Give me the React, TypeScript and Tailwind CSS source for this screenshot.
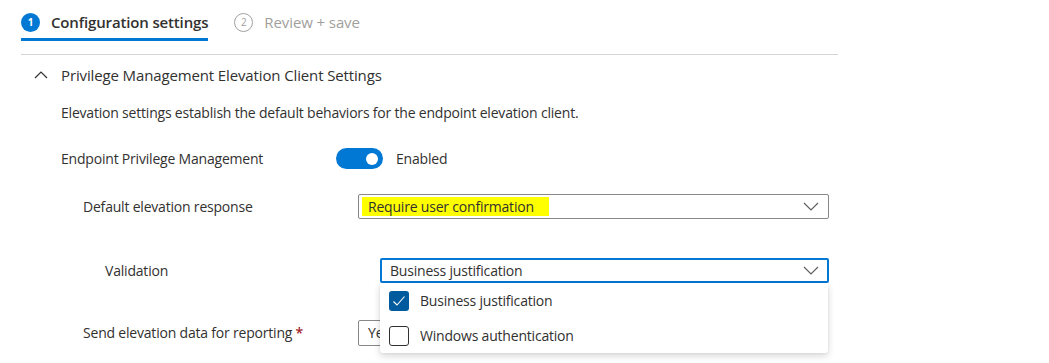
import React from "react";

function ChevronDown() {
  return (
    <svg width="16" height="9" viewBox="0 0 16 9" fill="none">
      <polyline points="1,1 8,8 15,1" stroke="#605e5c" strokeWidth="1.2" />
    </svg>
  );
}

function ChevronUp() {
  return (
    <svg width="14" height="8" viewBox="0 0 14 8" fill="none">
      <polyline points="1,7 7,1 13,7" stroke="#323130" strokeWidth="1.2" />
    </svg>
  );
}

export default function App() {
  return (
    <div className="w-[1049px] h-[363px] bg-white overflow-hidden font-['Open_Sans',sans-serif] text-[#323130] tracking-[-0.2px]">
      <div className="pl-[21px]">
        {/* Tabs */}
        <div className="flex gap-[26px]">
          <div className="flex items-center h-[41px] pt-[6px] border-b-[3px] border-[#0078d4]">
            <div className="w-[19px] h-[19px] rounded-full bg-[#0078d4] text-white text-[10px] font-bold flex items-center justify-center tracking-normal">
              1
            </div>
            <span className="ml-[11px] text-[15px] font-semibold leading-[20px] text-[#323130] tracking-[-0.15px]">
              Configuration settings
            </span>
          </div>
          <div className="flex items-center h-[41px] pt-[6px] pb-[3px]">
            <div className="w-[19px] h-[19px] rounded-full border border-[#a19f9d] text-[#a19f9d] text-[10px] flex items-center justify-center tracking-normal">
              2
            </div>
            <span className="ml-[11px] text-[15px] leading-[20px] text-[#a19f9d] tracking-[-0.1px]">Review + save</span>
          </div>
        </div>
        <div className="mt-[13px] w-[817px] h-px bg-[#d4d4d4]" />

        {/* Section header */}
        <div className="mt-[10px] flex items-center h-[20px]">
          <div className="ml-[13px] w-[27px]">
            <ChevronUp />
          </div>
          <span className="text-[15px] leading-[20px] tracking-[-0.13px]">Privilege Management Elevation Client Settings</span>
        </div>

        {/* Content */}
        <div className="ml-[40px] w-[768px]">
          <p className="mt-[18px] text-[14px] leading-[20px]">
            Elevation settings establish the default behaviors for the endpoint elevation client.
          </p>

          <div className="mt-[25px] flex items-center h-[21px]">
            <div className="w-[275px] text-[14px] leading-[20px]">Endpoint Privilege Management</div>
            <div className="w-[47px] h-[21px] rounded-full bg-[#0078d4] flex items-center justify-end pr-[5px]">
              <div className="w-[12px] h-[12px] rounded-full bg-white" />
            </div>
            <span className="ml-[13px] text-[14px] leading-[20px]">Enabled</span>
          </div>

          <div className="ml-[22px]">
            <div className="mt-[25px] flex items-center">
              <div className="w-[275px] text-[14px] leading-[20px]">Default elevation response</div>
              <div className="flex-1 h-[25px] border border-[#8a8886] rounded-[2px] flex items-center justify-between pl-[3px] pr-[9px]">
                <span className="bg-[#ffff00] h-[19px] pl-[6px] pr-[15px] text-[14px] leading-[19px]">
                  Require user confirmation
                </span>
                <ChevronDown />
              </div>
            </div>

            <div className="ml-[22px] mt-[39px] flex items-center">
              <div className="w-[275px] text-[14px] leading-[20px]">Validation</div>
              <div className="flex-1 relative">
                <div className="h-[25px] border-2 border-[#0078d4] rounded-[2px] flex items-center justify-between pl-[8px] pr-[8px]">
                  <span className="text-[14px] leading-[20px]">Business justification</span>
                  <ChevronDown />
                </div>
                <div className="absolute left-0 top-full w-[448px] z-10 bg-white rounded-b-[3px] shadow-[0_3px_7px_rgba(0,0,0,0.16),0_0_2px_rgba(0,0,0,0.08)]">
                  <div className="h-[35px] flex items-center pl-[9px]">
                    <div className="w-[20px] h-[20px] rounded-[3px] bg-[#005a9e] flex items-center justify-center">
                      <svg width="14" height="12" viewBox="0 0 14 12" fill="none">
                        <polyline points="1.5,6.5 5,10 12.5,1.5" stroke="white" strokeWidth="1.1" />
                      </svg>
                    </div>
                    <span className="ml-[11px] text-[14px] leading-[20px]">Business justification</span>
                  </div>
                  <div className="h-[35px] flex items-center pl-[9px]">
                    <div className="w-[20px] h-[20px] rounded-[3px] border border-[#323130] bg-white" />
                    <span className="ml-[11px] text-[14px] leading-[20px]">Windows authentication</span>
                  </div>
                </div>
              </div>
            </div>

            <div className="mt-[37px] flex items-center">
              <div className="w-[275px] text-[14px] leading-[20px]">
                Send elevation data for reporting <span className="text-[#a4262c] font-semibold">*</span>
              </div>
              <div className="w-[200px] h-[26px] border border-[#8a8886] rounded-[2px] flex items-center pl-[9px]">
                <span className="text-[14px] leading-[20px]">Yes</span>
              </div>
            </div>
          </div>
        </div>
      </div>
    </div>
  );
}
